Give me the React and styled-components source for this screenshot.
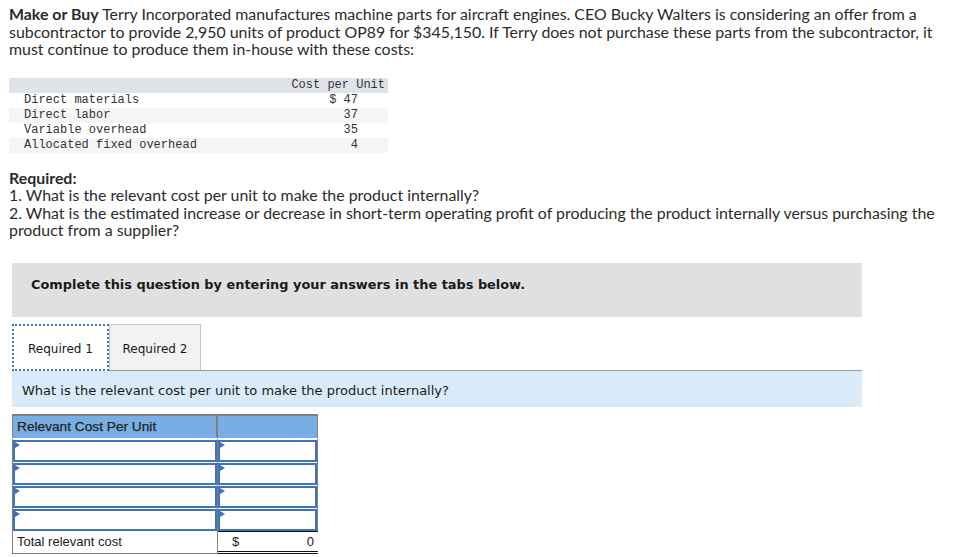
import React from 'react'
import styled, { createGlobalStyle } from 'styled-components'

const GlobalStyle = createGlobalStyle`
  body {
    margin: 0;
    background: #ffffff;
  }
`

const costs = [
  { label: 'Direct materials', value: '$ 47' },
  { label: 'Direct labor', value: '37' },
  { label: 'Variable overhead', value: '35' },
  { label: 'Allocated fixed overhead', value: '4' },
]

export default function App() {
  return (
    <Page>
      <GlobalStyle />
      <Intro>
        <b>Make or Buy</b> Terry Incorporated manufactures machine parts for aircraft engines. CEO Bucky Walters is considering an offer from a subcontractor to provide 2,950 units of product OP89 for $345,150. If Terry does not purchase these parts from the subcontractor, it must continue to produce them in-house with these costs:
      </Intro>

      <CostTable>
        <CostHead />
        <CostHead $right>Cost per Unit</CostHead>
        {costs.map((c, i) => (
          <React.Fragment key={c.label}>
            <CostLabel $shade={i % 2 === 1}>{c.label}</CostLabel>
            <CostValue $shade={i % 2 === 1}>{c.value}</CostValue>
          </React.Fragment>
        ))}
      </CostTable>

      <Required>
        <b>Required:</b>
        <br />
        1. What is the relevant cost per unit to make the product internally?
        <br />
        2. What is the estimated increase or decrease in short-term operating profit of producing the product internally versus purchasing the product from a supplier?
      </Required>

      <Instruction>Complete this question by entering your answers in the tabs below.</Instruction>

      <Tabs>
        <Tab $active>Required 1</Tab>
        <Tab>Required 2</Tab>
      </Tabs>
      <Question>What is the relevant cost per unit to make the product internally?</Question>

      <AnswerGrid>
        <HeadCell $divider>Relevant Cost Per Unit</HeadCell>
        <HeadCell />
        {[0, 1, 2, 3].map((r) => (
          <React.Fragment key={r}>
            <InputCell>
              <Entry />
              <Marker />
            </InputCell>
            <InputCell $last>
              <Entry />
              <Marker />
            </InputCell>
          </React.Fragment>
        ))}
        <TotalLabel>Total relevant cost</TotalLabel>
        <TotalValue>
          <span>$</span>
          <span>0</span>
        </TotalValue>
      </AnswerGrid>
    </Page>
  )
}

const Page = styled.div`
  padding: 5px 0 0 9px;
  width: 940px;
`

const Intro = styled.p`
  margin: 0;
  font-family: Lato, "Open Sans", sans-serif;
  font-size: 15.9px;
  line-height: 17.5px;
  color: #2b2b2b;
  width: 930px;
`

const CostTable = styled.div`
  margin-top: 20px;
  width: 379px;
  display: grid;
  grid-template-columns: 1fr 100px;
  font-family: "Liberation Mono", "DejaVu Sans Mono", monospace;
  font-size: 12px;
  color: #333;
`

const CostHead = styled.div`
  background: #dfe2e9;
  height: 15px;
  line-height: 15px;
  text-align: ${(p) => (p.$right ? 'right' : 'left')};
  padding-right: ${(p) => (p.$right ? '3px' : '0')};
`

const CostLabel = styled.div`
  background: ${(p) => (p.$shade ? '#f5f5f5' : '#ffffff')};
  height: 15px;
  line-height: 15px;
  padding-left: 15px;
`

const CostValue = styled.div`
  background: ${(p) => (p.$shade ? '#f5f5f5' : '#ffffff')};
  height: 15px;
  line-height: 15px;
  text-align: right;
  padding-right: 30px;
`

const Required = styled.p`
  margin: 16px 0 0;
  font-family: Lato, "Open Sans", sans-serif;
  font-size: 15.9px;
  line-height: 17.5px;
  color: #2b2b2b;
  width: 935px;
`

const Instruction = styled.div`
  margin: 24px 0 0 3px;
  width: 850px;
  height: 54px;
  box-sizing: border-box;
  background: #e0e0e0;
  display: flex;
  align-items: center;
  padding: 0 0 10px 19px;
  font-family: "DejaVu Sans", Verdana, sans-serif;
  font-weight: bold;
  font-size: 12.9px;
  color: #1a1a1a;
`

const Tabs = styled.div`
  margin: 7px 0 0 3px;
  width: 850px;
  display: flex;
  align-items: flex-end;
  border-bottom: 1px solid #999999;
`

const Tab = styled.div`
  box-sizing: border-box;
  height: ${(p) => (p.$active ? '47px' : '46px')};
  width: ${(p) => (p.$active ? '97px' : '92px')};
  display: flex;
  align-items: center;
  justify-content: center;
  padding-top: 3px;
  font-family: "DejaVu Sans", Verdana, sans-serif;
  font-size: 12px;
  color: #1a1a1a;
  background: ${(p) => (p.$active ? '#ffffff' : '#f2f2f2')};
  border: ${(p) => (p.$active ? '2px dotted #3d78c4' : '1px solid #c6c6c6')};
  border-bottom: ${(p) => (p.$active ? '2px dotted #3d78c4' : 'none')};
  margin-bottom: ${(p) => (p.$active ? '-1px' : '0')};
  position: relative;
`

const Question = styled.div`
  margin-left: 3px;
  width: 850px;
  height: 36px;
  box-sizing: border-box;
  background: #d9eaf8;
  display: flex;
  align-items: center;
  padding: 3px 0 0 10px;
  font-family: "DejaVu Sans", Verdana, sans-serif;
  font-size: 13px;
  color: #1a1a1a;
`

const AnswerGrid = styled.div`
  margin: 7px 0 0 3px;
  width: 306px;
  display: grid;
  grid-template-columns: 206px 100px;
  grid-auto-rows: 23px;
  border-top: 2px solid #7f7f7f;
  font-family: "Liberation Sans", Arial, sans-serif;
  font-size: 13px;
  color: #222;
`

const HeadCell = styled.div`
  box-sizing: border-box;
  background: #78aee4;
  display: flex;
  align-items: center;
  padding-left: 4px;
  font-size: 13.7px;
  -webkit-text-stroke: 0.25px #222;
  border-left: ${(p) => (p.$divider ? '1px solid #7f7f7f' : 'none')};
  border-right: ${(p) => (p.$divider ? '2px' : '1px')} solid #7f7f7f;
  height: 22px;
`

const InputCell = styled.div`
  position: relative;
  box-sizing: border-box;
  padding-top: 1px;
  border-left: ${(p) => (p.$last ? 'none' : '1px solid #7f7f7f')};
  border-right: 1px solid #7f7f7f;
`

const Entry = styled.div`
  box-sizing: border-box;
  height: 100%;
  border: 2px solid #3f74b9;
  background: #ffffff;
`

const Marker = styled.span`
  position: absolute;
  top: 3px;
  left: 2px;
  width: 0;
  height: 0;
  border-top: 3px solid transparent;
  border-bottom: 3px solid transparent;
  border-left: 5px solid #3f74b9;
`

const TotalLabel = styled.div`
  box-sizing: border-box;
  display: flex;
  align-items: center;
  padding-left: 4px;
  border-left: 1px solid #7f7f7f;
  border-right: 1px solid #7f7f7f;
  border-bottom: 1px solid #7f7f7f;
`

const TotalValue = styled.div`
  box-sizing: border-box;
  display: flex;
  align-items: center;
  justify-content: space-between;
  padding: 0 4px 0 14px;
  border-top: 1px solid #111;
  border-bottom: 3px double #111;
`
